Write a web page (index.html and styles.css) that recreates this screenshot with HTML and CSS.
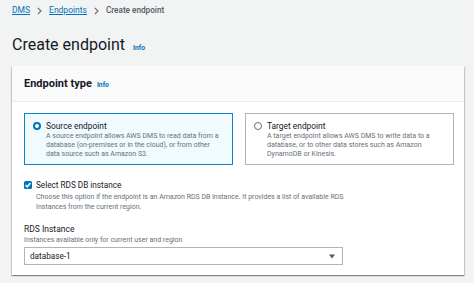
FILE: index.html
```html
<!DOCTYPE html>
<html>
<head>
<meta charset="utf-8">
<link rel="stylesheet" href="styles.css">
</head>
<body>
<nav class="breadcrumbs">
  <a class="crumb-link" href="#">DMS</a>
  <svg class="crumb-sep" width="5" height="8" viewBox="0 0 5 8"><path d="M0.8 0.8 L4 4 L0.8 7.2" fill="none" stroke="#687078" stroke-width="1.2"/></svg>
  <a class="crumb-link" href="#">Endpoints</a>
  <svg class="crumb-sep" width="5" height="8" viewBox="0 0 5 8"><path d="M0.8 0.8 L4 4 L0.8 7.2" fill="none" stroke="#687078" stroke-width="1.2"/></svg>
  <span class="crumb-current">Create endpoint</span>
</nav>
<div class="page-header">
  <h1 class="page-title">Create endpoint</h1>
  <a class="info-link" href="#">Info</a>
</div>
<section class="container">
  <div class="container-header">
    <h2 class="container-title">Endpoint type</h2>
    <a class="info-link" href="#">Info</a>
  </div>
  <div class="container-body">
    <div class="tiles">
      <div class="tile tile-selected">
        <div class="tile-head">
          <span class="radio radio-checked"></span>
          <span class="tile-title">Source endpoint</span>
        </div>
        <p class="tile-desc">A source endpoint allows AWS DMS to read data from a database (on-premises or in the cloud), or from other data source such as Amazon S3.</p>
      </div>
      <div class="tile">
        <div class="tile-head">
          <span class="radio"></span>
          <span class="tile-title">Target endpoint</span>
        </div>
        <p class="tile-desc">A target endpoint allows AWS DMS to write data to a database, or to other data stores such as Amazon DynamoDB or Kinesis.</p>
      </div>
    </div>
    <div class="checkbox-field">
      <div class="checkbox-row">
        <span class="checkbox">
          <svg width="8" height="8" viewBox="0 0 8 8"><path d="M1.6 4.1 L3.3 5.8 L6.4 2.1" fill="none" stroke="#fff" stroke-width="1.5"/></svg>
        </span>
        <span class="checkbox-label">Select RDS DB instance</span>
      </div>
      <p class="checkbox-desc">Choose this option if the endpoint is an Amazon RDS DB instance. It provides a list of available RDS Instances from the current region.</p>
    </div>
    <div class="form-field">
      <div class="field-label">RDS Instance</div>
      <div class="field-desc">Instances available only for current user and region</div>
      <div class="select">
        <span class="select-value">database-1</span>
        <svg class="select-caret" width="6" height="5" viewBox="0 0 6 5"><path d="M0 0.5 L6 0.5 L3 4.5 Z" fill="#545b64"/></svg>
      </div>
    </div>
  </div>
</section>
</body>
</html>
```
FILE: styles.css
```css
* { box-sizing: border-box; }
body {
  margin: 0;
  background: #f2f3f3;
  font-family: Roboto, "Open Sans", sans-serif;
  color: #16191f;
  width: 474px;
  height: 283px;
  overflow: hidden;
}
.breadcrumbs {
  display: flex;
  align-items: center;
  gap: 6px;
  padding: 0 12px;
  height: 21px;
  font-size: 8.5px;
  line-height: 21px;
}
.crumb-link {
  color: #0073bb;
  text-decoration: underline;
}
.crumb-sep {
  display: block;
  margin: 0 1px;
}
.crumb-current {
  color: #545b64;
  font-weight: 500;
  font-size: 8.2px;
}
.page-header {
  display: flex;
  align-items: baseline;
  gap: 8px;
  padding: 14px 12px 0;
  height: 45px;
}
.page-title {
  margin: 0;
  font-size: 16px;
  font-weight: 400;
  line-height: 20px;
}
.info-link {
  color: #0073bb;
  font-size: 6.8px;
  font-weight: 700;
  text-decoration: none;
}
.container {
  margin: 0 10px 0 12px;
  background: #fff;
  box-shadow: 0 1px 1px rgba(0,28,36,0.3), 1px 1px 1px rgba(0,28,36,0.15), -1px 1px 1px rgba(0,28,36,0.15);
}
.container-header {
  display: flex;
  align-items: baseline;
  gap: 5px;
  padding: 11px 12px 0;
  height: 36px;
  background: #fafafa;
  border-bottom: 1px solid #eaeded;
}
.container-title {
  margin: 0;
  font-size: 11px;
  font-weight: 700;
  line-height: 14px;
}
.container-body {
  padding: 11px 10px 10px 12px;
}
.tiles {
  display: grid;
  grid-template-columns: 1fr 1fr;
  gap: 12px;
}
.tile {
  border: 1px solid #aab7b8;
  padding: 6px 8px 0 8px;
  height: 52px;
  background: #fff;
}
.tile-selected {
  border-color: #0a84c6;
  background: #f1faff;
}
.tile-head {
  display: flex;
  align-items: center;
  gap: 5px;
  height: 12px;
}
.radio {
  width: 8px;
  height: 8px;
  border-radius: 50%;
  border: 1px solid #687078;
  background: #fff;
  flex: none;
}
.radio-checked {
  border: 2.4px solid #0073bb;
}
.tile-title {
  font-size: 8.4px;
  line-height: 12px;
}
.tile-desc {
  margin: 0 0 0 13px;
  font-size: 7px;
  line-height: 9px;
  color: #687078;
}
.checkbox-field {
  margin-top: 14px;
}
.checkbox-row {
  display: flex;
  align-items: center;
  gap: 4px;
  height: 12px;
}
.checkbox {
  width: 8px;
  height: 8px;
  border-radius: 1.5px;
  background: #0073bb;
  display: flex;
  align-items: center;
  justify-content: center;
  flex: none;
}
.checkbox-label {
  font-size: 8.2px;
  line-height: 12px;
}
.checkbox-desc {
  margin: 1px 0 0 12px;
  font-size: 7px;
  line-height: 10px;
  color: #687078;
  width: 320px;
}
.form-field {
  margin-top: 11px;
}
.field-label {
  font-size: 8.5px;
  line-height: 12px;
}
.field-desc {
  font-size: 7px;
  line-height: 10px;
  color: #687078;
}
.select {
  margin-top: 2px;
  width: 319px;
  height: 18px;
  border: 1px solid #aab7b8;
  background: #fff;
  display: flex;
  align-items: center;
  justify-content: space-between;
  padding: 0 7px 0 5px;
}
.select-value {
  font-size: 8.2px;
}
.select-caret {
  display: block;
}
```
